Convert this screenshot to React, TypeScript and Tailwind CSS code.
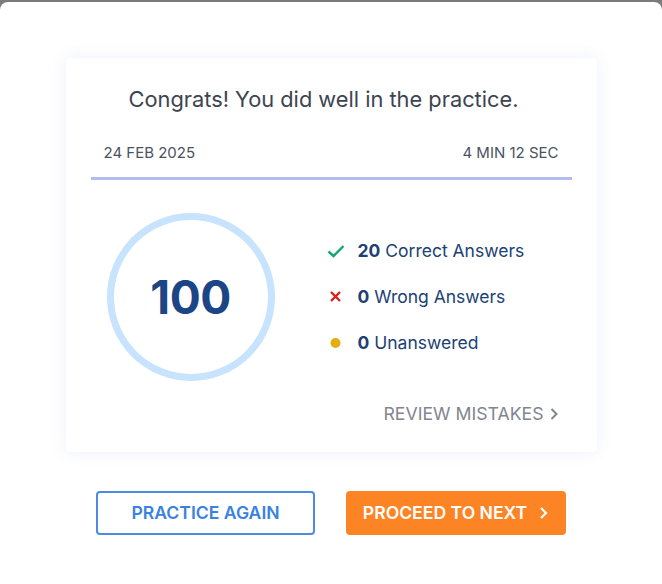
import React from "react";

export default function App() {
  return (
    <div className="w-[662px] h-[584px] bg-[#7b7b7b] overflow-hidden" style={{ fontFamily: "Inter, 'Noto Sans', sans-serif" }}>
      <div className="mt-[2px] h-[582px] bg-white rounded-t-[8px] flex flex-col items-center pt-[56px]">
        <div className="w-[531px] bg-white rounded-[4px] shadow-[0_0_16px_rgba(90,110,200,0.10)] pt-[27px] pb-[26px] px-[25px] flex flex-col">
          <div className="text-center pr-[15px] text-[21.8px] leading-[28px] text-[#3d4450]">Congrats! You did well in the practice.</div>
          <div className="mt-[30px] flex justify-between px-[13px] text-[15px] leading-[20px] text-[#4b5260]">
            <span>24 FEB 2025</span>
            <span>4 MIN 12 SEC</span>
          </div>
          <div className="mt-[14px] h-[3px] bg-[#b4bbef]" />
          <div className="mt-[33px] flex items-center pl-[16px]">
            <div className="w-[168px] h-[168px] rounded-full border-[7px] border-[#c7e3fd] flex items-center justify-center">
              <span className="text-[46px] font-bold text-[#1c4586] tracking-[-0.5px]">100</span>
            </div>
            <div className="ml-[52px] flex flex-col gap-[22px] text-[17.5px] leading-[24px] text-[#203f74]">
              <div className="flex items-center">
                <svg width="18" height="14" viewBox="0 0 18 14" className="mr-[13px]">
                  <path d="M1.5 7.5 L6.5 12 L16.5 2" fill="none" stroke="#13a86b" strokeWidth="2.4" />
                </svg>
                <span><b className="font-bold">20</b> Correct Answers</span>
              </div>
              <div className="flex items-center">
                <svg width="18" height="14" viewBox="0 0 18 14" className="mr-[13px]">
                  <path d="M4 2 L13 11 M13 2 L4 11" fill="none" stroke="#dc1f1f" strokeWidth="2.4" />
                </svg>
                <span><b className="font-bold">0</b> Wrong Answers</span>
              </div>
              <div className="flex items-center">
                <svg width="18" height="14" viewBox="0 0 18 14" className="mr-[13px]">
                  <circle cx="8.5" cy="7" r="5" fill="#e6ad0e" />
                </svg>
                <span><b className="font-bold">0</b> Unanswered</span>
              </div>
            </div>
          </div>
          <div className="mt-[21px] flex justify-end items-center pr-[12px] text-[17.7px] leading-[24px] text-[#808590]">
            <span>REVIEW MISTAKES</span>
            <svg width="12" height="14" viewBox="0 0 12 14" className="ml-[4px]">
              <path d="M3.5 2 L8.5 7 L3.5 12" fill="none" stroke="#808590" strokeWidth="2" />
            </svg>
          </div>
        </div>
        <div className="mt-[39px] flex gap-[31px]">
          <button className="w-[219px] h-[44px] rounded-[4px] border-2 border-[#4a8ce0] text-[#3a82df] text-[17.6px] font-semibold bg-white">
            PRACTICE AGAIN
          </button>
          <button className="w-[220px] h-[44px] rounded-[4px] bg-[#fd8425] text-white text-[17.6px] font-semibold flex items-center justify-center">
            <span>PROCEED TO NEXT</span>
            <svg width="12" height="14" viewBox="0 0 12 14" className="ml-[10px]">
              <path d="M4 2 L9 7 L4 12" fill="none" stroke="#ffffff" strokeWidth="2.2" />
            </svg>
          </button>
        </div>
      </div>
    </div>
  );
}
